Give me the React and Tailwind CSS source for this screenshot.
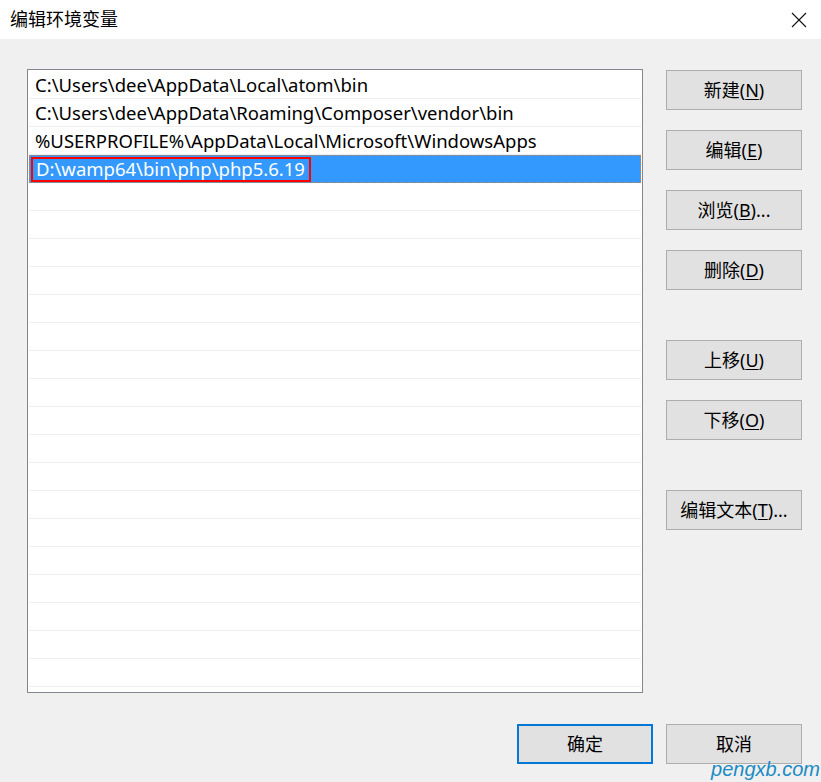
import React from 'react';

const paths = [
  'C:\\Users\\dee\\AppData\\Local\\atom\\bin',
  'C:\\Users\\dee\\AppData\\Roaming\\Composer\\vendor\\bin',
  '%USERPROFILE%\\AppData\\Local\\Microsoft\\WindowsApps',
  'D:\\wamp64\\bin\\php\\php5.6.19',
];

const font = { fontFamily: '"Noto Sans", "Noto Sans CJK SC", sans-serif' };

const Btn = ({ label, hot, tail = '', primary = false, className = '' }) => (
  <button
    className={`flex h-[40px] w-[136px] items-center justify-center bg-[#e1e1e1] text-[18px] text-black ${
      primary ? 'border-2 border-[#0078d7]' : 'border border-[#adadad]'
    } ${className}`}
  >
    {label}
    {hot && (
      <>
        (<span className="underline underline-offset-2">{hot}</span>)
      </>
    )}
    {tail}
  </button>
);

export default function App() {
  const rows = Array.from({ length: 22 }, (_, i) => paths[i] || '');

  return (
    <div className="flex h-[782px] w-[821px] flex-col overflow-hidden bg-[#f0f0f0]" style={font}>
      {/* title bar */}
      <div className="flex h-[39px] shrink-0 items-center justify-between bg-white pl-[10px] pr-[14px]">
        <span className="text-[18px] text-black">编辑环境变量</span>
        <svg width="16" height="16" viewBox="0 0 16 16" className="mt-px">
          <path d="M1 1 L15 15 M15 1 L1 15" stroke="#111" strokeWidth="1.1" fill="none" />
        </svg>
      </div>

      <div className="flex flex-1 flex-col pl-[27px] pr-[19px] pt-[30px]">
        <div className="flex">
          {/* path list */}
          <div className="h-[624px] w-[616px] border border-[#828790] bg-white px-px pt-px">
            {rows.map((text, i) => {
              const sel = i === 3;
              return (
                <div
                  key={i}
                  className={`flex h-[28px] items-center pl-[6px] text-[18.5px] ${
                    sel
                      ? 'border border-dotted border-[#c7834a] bg-[#3399ff] text-white'
                      : 'border-b border-[#efefef] text-black'
                  }`}
                >
                  {sel ? (
                    <span className="-ml-[5px] flex h-[25px] items-center border-2 border-[#ff0000] pl-[3px] pr-[4px]">
                      {text}
                    </span>
                  ) : (
                    text
                  )}
                </div>
              );
            })}
          </div>

          {/* side buttons */}
          <div className="ml-[23px] flex flex-col pt-px">
            <Btn label="新建" hot="N" />
            <Btn label="编辑" hot="E" className="mt-[20px]" />
            <Btn label="浏览" hot="B" tail="..." className="mt-[20px]" />
            <Btn label="删除" hot="D" className="mt-[20px]" />
            <Btn label="上移" hot="U" className="mt-[50px]" />
            <Btn label="下移" hot="O" className="mt-[20px]" />
            <Btn label="编辑文本" hot="T" tail="..." className="mt-[50px]" />
          </div>
        </div>

        {/* bottom buttons */}
        <div className="mt-[31px] flex justify-end gap-[13px]">
          <Btn label="确定" primary />
          <Btn label="取消" />
        </div>

        <div className="relative flex-1">
          <span
            className="absolute -bottom-[2px] -right-[18px] text-[20px] italic text-[#1a8bc4]"
            style={{ fontFamily: '"Liberation Sans", Arial, sans-serif' }}
          >
            pengxb.com
          </span>
        </div>
      </div>
    </div>
  );
}
